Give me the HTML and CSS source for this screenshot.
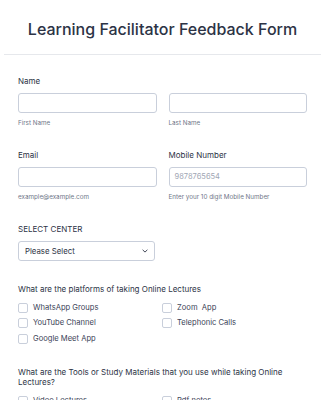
FILE: index.html
```html
<!DOCTYPE html>
<html>
<head>
<meta charset="utf-8">
<link rel="stylesheet" href="styles.css">
</head>
<body>
<div class="page">
  <div class="header">
    <h1 class="title">Learning Facilitator Feedback Form</h1>
  </div>
  <div class="form">
    <div class="field">
      <div class="label">Name</div>
      <div class="row">
        <div class="col">
          <div class="input"></div>
          <div class="sub">First Name</div>
        </div>
        <div class="col">
          <div class="input"></div>
          <div class="sub">Last Name</div>
        </div>
      </div>
    </div>
    <div class="row field">
      <div class="col">
        <div class="label">Email</div>
        <div class="input"></div>
        <div class="sub">example@example.com</div>
      </div>
      <div class="col">
        <div class="label">Mobile Number</div>
        <div class="input"><span class="placeholder">9878765654</span></div>
        <div class="sub">Enter your 10 digit Mobile Number</div>
      </div>
    </div>
    <div class="field">
      <div class="label">SELECT CENTER</div>
      <div class="select">
        <span>Please Select</span>
        <svg class="chev" width="6" height="4" viewBox="0 0 6 4"><polyline points="0.6,0.8 3,3.1 5.4,0.8" fill="none" stroke="#2c3345" stroke-width="0.9"/></svg>
      </div>
    </div>
    <div class="field">
      <div class="label">What are the platforms of taking Online Lectures</div>
      <div class="checks">
        <div class="check"><span class="box"></span>WhatsApp Groups</div>
        <div class="check"><span class="box"></span>Zoom &nbsp;App</div>
        <div class="check"><span class="box"></span>YouTube Channel</div>
        <div class="check"><span class="box"></span>Telephonic Calls</div>
        <div class="check"><span class="box"></span>Google Meet App</div>
      </div>
    </div>
    <div class="field">
      <div class="label">What are the Tools or Study Materials that you use while taking Online Lectures?</div>
      <div class="checks">
        <div class="check"><span class="box"></span>Video Lectures</div>
        <div class="check"><span class="box"></span>Pdf notes</div>
      </div>
    </div>
  </div>
</div>
</body>
</html>
```
FILE: styles.css
```css
* { box-sizing: border-box; }
html, body { margin: 0; padding: 0; background: #ffffff; }
body {
  font-family: Inter, "Noto Sans", "Liberation Sans", sans-serif;
  color: #2c3345;
}
.page { width: 325px; }
.header {
  margin: 0 4px;
  padding: 20px 0 16px;
  border-bottom: 1px solid #e6e8ec;
  text-align: center;
}
.title {
  margin: 0;
  font-size: 16px;
  line-height: 18px;
  font-weight: 500;
  color: #2c3345;
}
.form {
  padding: 21px 18px 0;
  display: flex;
  flex-direction: column;
  gap: 23px;
}
.field { display: flex; flex-direction: column; }
.row {
  display: grid;
  grid-template-columns: 1fr 1fr;
  column-gap: 12px;
}
.col { display: flex; flex-direction: column; }
.label {
  font-size: 8px;
  line-height: 10px;
  font-weight: 400;
  color: #2c3345;
  margin-bottom: 6.5px;
}
.input {
  height: 20px;
  border: 1px solid #c9cfdb;
  border-radius: 3px;
  background: #fff;
  display: flex;
  align-items: center;
  padding: 0 5px;
}
.placeholder {
  font-size: 7.5px;
  color: #a0a6b4;
}
.sub {
  margin-top: 6.5px;
  font-size: 6.3px;
  line-height: 8px;
  color: #6f7689;
}
.select {
  width: 137px;
  height: 20px;
  border: 1px solid #c9cfdb;
  border-radius: 3px;
  display: flex;
  align-items: center;
  justify-content: space-between;
  padding: 0 6px;
  font-size: 7.8px;
  color: #2c3345;
}
.chev { display: block; }
.checks {
  display: grid;
  grid-template-columns: 144px 1fr;
  row-gap: 5.3px;
  margin-top: 3px;
}
.check {
  display: flex;
  align-items: center;
  font-size: 7.6px;
  line-height: 10px;
  color: #3b4357;
}
.box {
  width: 10px;
  height: 10px;
  border: 1px solid #c9cfdb;
  border-radius: 2px;
  margin-right: 5px;
  flex: none;
}
```
